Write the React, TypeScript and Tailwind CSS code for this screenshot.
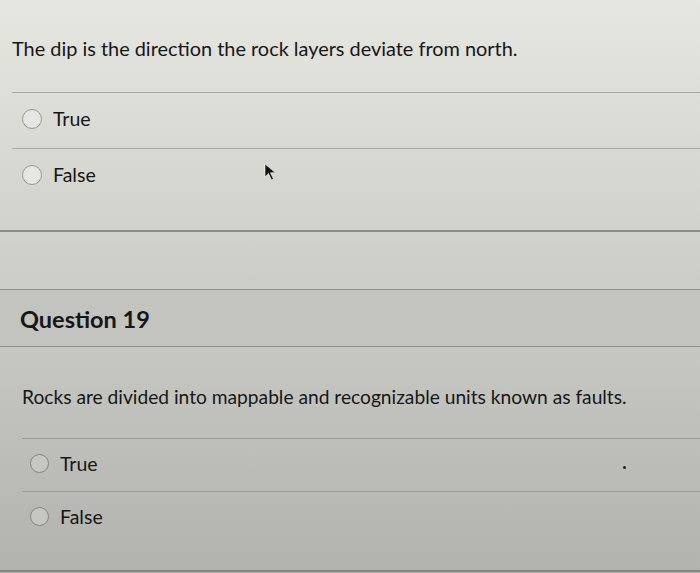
import React from "react";

const font = { fontFamily: "Lato, 'Noto Sans', sans-serif" };

function Option({ label, indent }: { label: string; indent: "a" | "b" }) {
  return (
    <div className={indent === "a" ? "flex h-[55px] items-center pb-[3px] pl-[10px]" : "flex h-[52px] items-center pb-[3px] pl-[8px]"}>
      <span
        className={
          indent === "a"
            ? "h-[20px] w-[20px] rounded-full border-[1.5px] border-[#979793] bg-[#e6e6e2]"
            : "h-[19px] w-[19px] rounded-full border-[1.5px] border-[#858581] bg-[#c6c6c2]"
        }
      />
      <span className="ml-[11px] text-[19.5px] text-[#161616]">{label}</span>
    </div>
  );
}

export default function App() {
  return (
    <div
      className="relative h-[573px] w-[700px] overflow-hidden bg-gradient-to-b from-[#e7e7e1] via-[#cdcdc8] to-[#b2b2ae]"
      style={font}
    >
      <div className="pl-[12px] pt-[36px]">
        <p className="text-[19.9px] leading-[24px] text-[#161616]">
          The dip is the direction the rock layers deviate from north.
        </p>
        <div className="mt-[32px] border-t border-[#a9a9a4]" />
        <Option label="True" indent="a" />
        <div className="border-t border-[#a9a9a4]" />
        <Option label="False" indent="a" />
      </div>
      <div className="mt-[26px] border-t-2 border-[#8c8c88]" />
      <div className="h-[57px]" />
      <div className="border-t border-[#8e8e8a] bg-[#c3c3bf]">
        <div className="flex h-[56px] items-center pl-[20px] pt-[3px] text-[23.5px] font-bold text-[#161616]">Question 19</div>
      </div>
      <div className="border-t border-[#8e8e8a]" />
      <div className="pl-[22px] pt-[38px]">
        <p className="text-[19.2px] leading-[24px] text-[#161616]">
          Rocks are divided into mappable and recognizable units known as faults.
        </p>
        <div className="mt-[29px] border-t border-[#9c9c98]" />
        <Option label="True" indent="b" />
        <div className="border-t border-[#9c9c98]" />
        <Option label="False" indent="b" />
      </div>
      <div className="absolute bottom-[1px] left-0 w-full border-t-2 border-[#858581]" />
      <svg className="absolute left-[264px] top-[163px]" width="13" height="19" viewBox="0 0 13 19">
        <path d="M1 1 L1 14 L4.5 10.5 L7.5 17 L9.5 16 L6.5 9.8 L11.5 9.8 Z" fill="#111" stroke="#fff" strokeWidth="0.6" />
      </svg>
      <div className="absolute left-[623px] top-[466px] h-[3px] w-[3px] rounded-full bg-[#222]" />
    </div>
  );
}
